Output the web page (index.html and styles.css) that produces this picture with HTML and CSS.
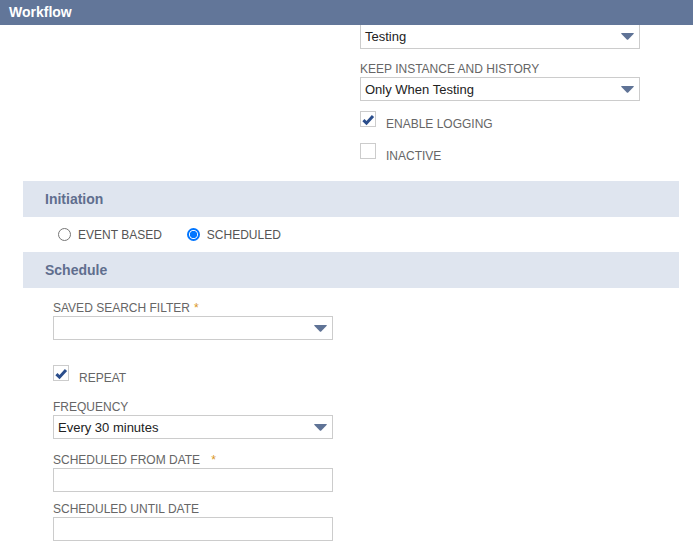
FILE: index.html
```html
<!DOCTYPE html>
<html>
<head>
<meta charset="utf-8">
<link rel="stylesheet" href="styles.css">
</head>
<body>
<div class="header">Workflow</div>
<div class="top">
  <div class="select cut"><span>Testing</span><svg class="arrow" width="13" height="7" viewBox="0 0 13 7"><path d="M0 0.5 Q0 0 1 0 H12 Q13 0 13 0.5 L7.2 6.4 Q6.5 7 5.8 6.4 Z" fill="#5f7396"/></svg></div>
  <div class="label mt13">KEEP INSTANCE AND HISTORY</div>
  <div class="select"><span>Only When Testing</span><svg class="arrow" width="13" height="7" viewBox="0 0 13 7"><path d="M0 0.5 Q0 0 1 0 H12 Q13 0 13 0.5 L7.2 6.4 Q6.5 7 5.8 6.4 Z" fill="#5f7396"/></svg></div>
  <div class="check-row mt10">
    <span class="box"><svg width="16" height="16" viewBox="0 0 16 16"><path d="M3.4 9.2 L6.5 12.2 L13 5" fill="none" stroke="#2b4e8c" stroke-width="3" stroke-linejoin="miter" stroke-linecap="butt"/></svg></span>
    <span class="check-label">ENABLE LOGGING</span>
  </div>
  <div class="check-row mt12">
    <span class="box"></span>
    <span class="check-label">INACTIVE</span>
  </div>
</div>
<div class="band band-first">Initiation</div>
<div class="radio-row">
  <span class="radio"></span><span class="radio-label">EVENT BASED</span>
  <span class="radio on gap"></span><span class="radio-label">SCHEDULED</span>
</div>
<div class="band">Schedule</div>
<div class="fields">
  <div class="label mt13">SAVED SEARCH FILTER<span class="req r1">*</span></div>
  <div class="select"><span></span><svg class="arrow" width="13" height="7" viewBox="0 0 13 7"><path d="M0 0.5 Q0 0 1 0 H12 Q13 0 13 0.5 L7.2 6.4 Q6.5 7 5.8 6.4 Z" fill="#5f7396"/></svg></div>
  <div class="check-row mt25">
    <span class="box"><svg width="16" height="16" viewBox="0 0 16 16"><path d="M3.4 9.2 L6.5 12.2 L13 5" fill="none" stroke="#2b4e8c" stroke-width="3" stroke-linejoin="miter" stroke-linecap="butt"/></svg></span>
    <span class="check-label">REPEAT</span>
  </div>
  <div class="label mt15">FREQUENCY</div>
  <div class="select"><span>Every 30 minutes</span><svg class="arrow" width="13" height="7" viewBox="0 0 13 7"><path d="M0 0.5 Q0 0 1 0 H12 Q13 0 13 0.5 L7.2 6.4 Q6.5 7 5.8 6.4 Z" fill="#5f7396"/></svg></div>
  <div class="label mt14">SCHEDULED FROM DATE<span class="req r2">*</span></div>
  <div class="input"></div>
  <div class="label mt10">SCHEDULED UNTIL DATE</div>
  <div class="input"></div>
</div>
</body>
</html>
```
FILE: styles.css
```css
html, body {
  margin: 0;
  padding: 0;
  background: #ffffff;
  font-family: "Liberation Sans", Arial, sans-serif;
}
.header {
  height: 25px;
  line-height: 25px;
  background: #627699;
  color: #ffffff;
  font-weight: bold;
  font-size: 14px;
  padding-left: 9px;
}
.top {
  padding-left: 360px;
  width: 280px;
}
.fields {
  padding-left: 53px;
  width: 280px;
}
.label {
  font-size: 12px;
  line-height: 14px;
  color: #666666;
  margin-bottom: 1px;
  white-space: nowrap;
}
.req {
  color: #d9961e;
  font-size: 12px;
}
.r1 { margin-left: 4px; }
.r2 { margin-left: 11px; }
.select, .input {
  box-sizing: border-box;
  width: 280px;
  height: 24px;
  border: 1px solid #cccccc;
  background: #ffffff;
  display: flex;
  align-items: center;
  justify-content: space-between;
  padding: 0 5px 0 4px;
  font-size: 13px;
  color: #222222;
}
.select.cut {
  border-top-width: 0;
  height: 24px;
}
.arrow {
  display: block;
}
.check-row {
  display: flex;
  align-items: flex-start;
  height: 20px;
}
.box {
  box-sizing: border-box;
  width: 16px;
  height: 16px;
  border: 1px solid #cccccc;
  background: #ffffff;
  position: relative;
}
.box svg {
  position: absolute;
  left: -1px;
  top: -1px;
}
.check-label {
  margin-left: 10px;
  margin-top: 6px;
  font-size: 12px;
  line-height: 14px;
  color: #666666;
}
.band {
  margin-left: 23px;
  width: 634px;
  height: 36px;
  line-height: 36px;
  padding-left: 22px;
  background: #dfe5ef;
  color: #5f6e8e;
  font-weight: bold;
  font-size: 14px;
}
.band-first { margin-top: 18px; }
.radio-row {
  height: 35px;
  display: flex;
  align-items: center;
  padding-left: 58px;
}
.radio {
  box-sizing: border-box;
  width: 13px;
  height: 13px;
  border-radius: 50%;
  border: 1px solid #767676;
  background: #ffffff;
}
.radio.on {
  border: 2px solid #0075ff;
  background: radial-gradient(circle, #0075ff 0 3.4px, #ffffff 3.9px);
}
.radio.gap { margin-left: 25px; }
.radio-label {
  margin-left: 7px;
  font-size: 12px;
  color: #555555;
}
.mt10 { margin-top: 10px; }
.mt11 { margin-top: 11px; }
.mt12 { margin-top: 12px; }
.mt13 { margin-top: 13px; }
.mt14 { margin-top: 14px; }
.mt15 { margin-top: 15px; }
.mt25 { margin-top: 25px; }
```
